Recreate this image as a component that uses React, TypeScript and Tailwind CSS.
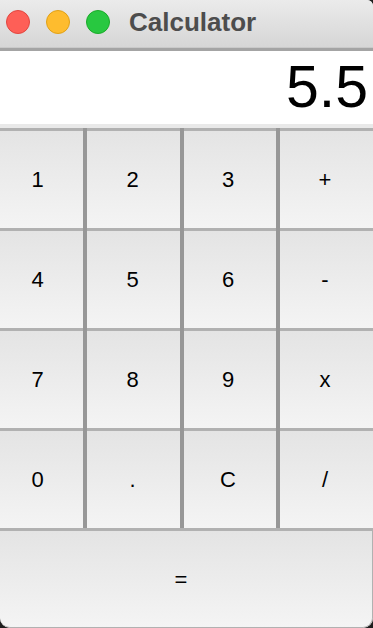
import React from "react";

const rows = [
  ["1", "2", "3", "+"],
  ["4", "5", "6", "-"],
  ["7", "8", "9", "x"],
  ["0", ".", "C", "/"],
];

// per-column nudge so labels sit where the Swing buttons draw them
const colPad = ["pr-[8px]", "pr-[2px]", "pr-[4px]", "pr-[3px]"];

const font = { fontFamily: '"Liberation Sans", Arial, Helvetica, sans-serif' };

export default function App() {
  return (
    <div className="w-[373px] h-[628px] bg-[#1e1e1e]" style={font}>
      <div className="w-full h-full flex flex-col overflow-hidden rounded-b-[10px] rounded-tr-[6px] bg-[#f3f3f3]">
        {/* Title bar */}
        <div className="h-[48px] flex items-center pb-[4px] bg-gradient-to-b from-[#ebebeb] to-[#d6d6d6] border-b border-[#c9c9c9]">
          <div className="flex items-center gap-[16px] pl-[6px]">
            <span className="w-[24px] h-[24px] rounded-full bg-[#fe5f57] border border-[#e2463f]" />
            <span className="w-[24px] h-[24px] rounded-full bg-[#febc2e] border border-[#e1a116]" />
            <span className="w-[24px] h-[24px] rounded-full bg-[#28c840] border border-[#1aab29]" />
          </div>
          <span className="ml-[19px] text-[26px] font-bold text-[#4d4d4d] leading-none">Calculator</span>
        </div>
        <div className="h-[3px] bg-[#a4a4a4]" />

        {/* Display */}
        <div className="h-[73px] bg-white flex items-center justify-end pr-[5px]">
          <span className="text-[59px] text-black leading-none">5.5</span>
        </div>
        <div className="h-[4px] bg-[#e9e9e9]" />

        {/* Keys */}
        <div className="grid grid-cols-[83px_93px_92px_93px] gap-x-[4px] bg-[#979797] border-r border-[#a8a8a8]">
          {rows.flat().map((k, i) => (
            <button
              key={k}
              className={`h-[100px] border-t-[3px] border-[#b1b1b1] bg-gradient-to-b from-[#e4e4e4] to-[#f4f4f4] text-[22px] text-black flex items-center justify-center ${colPad[i % 4]}`}
            >
              {k}
            </button>
          ))}
        </div>
        <button className="flex-1 border-t-[3px] border-b border-r border-[#b1b1b1] rounded-b-[10px] bg-gradient-to-b from-[#e4e4e4] to-[#f4f4f4] text-[22px] text-black flex items-center justify-center pr-[10px]">
          =
        </button>
      </div>
    </div>
  );
}
